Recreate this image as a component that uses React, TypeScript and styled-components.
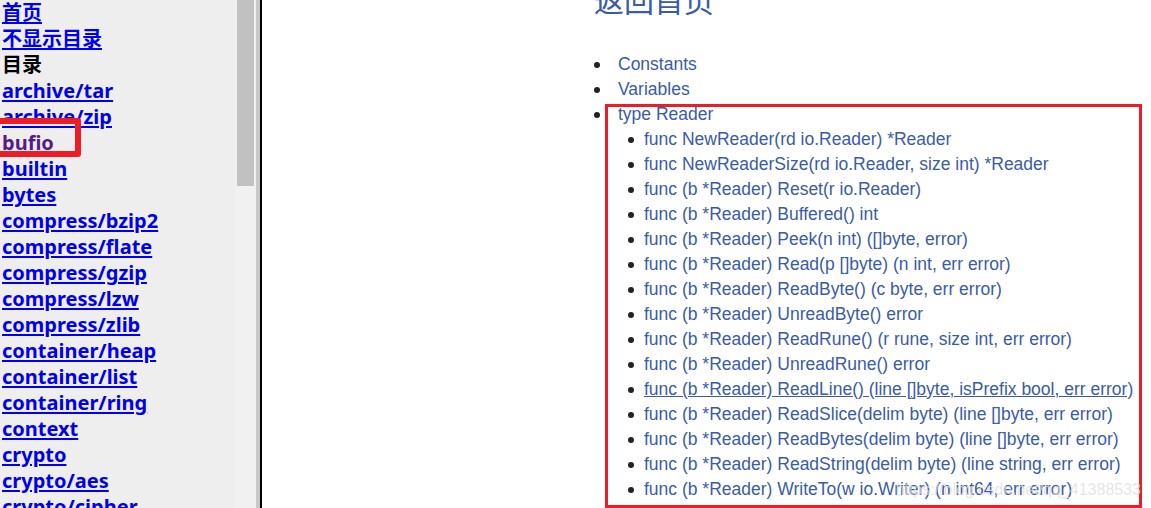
import React from "react";
import styled, { createGlobalStyle } from "styled-components";

const GlobalStyle = createGlobalStyle`
  html, body {
    margin: 0;
    padding: 0;
    height: 100%;
    overflow: hidden;
    background: #ffffff;
  }
  #root {
    height: 100%;
  }
`;

const Page = styled.div`
  display: flex;
  height: 508px;
  overflow: hidden;
`;

const Sidebar = styled.aside`
  display: flex;
  flex: 0 0 auto;
  height: 100%;
  background: #eeeeee;
`;

const Nav = styled.nav`
  width: 233px;
  padding-left: 2px;
  font-family: "Noto Sans", "Noto Sans CJK SC", sans-serif;
  font-size: 20px;
  font-weight: 700;
  line-height: 26px;
  white-space: nowrap;
`;

const NavLink = styled.a<{ $visited?: boolean }>`
  position: relative;
  display: block;
  width: fit-content;
  color: ${(p) => (p.$visited ? "#551a8b" : "#0000ee")};
  text-decoration: underline;
  text-underline-offset: 2px;
`;

const NavTitle = styled.div`
  color: #000000;
`;

const Mark = styled.span`
  position: absolute;
  top: -12px;
  left: -12px;
  width: 79px;
  height: 27px;
  border: 6px solid #ee1c25;
  border-radius: 3px;
`;

const Track = styled.div`
  width: 21px;
  height: 100%;
  background: #f1f1f1;
`;

const Thumb = styled.div`
  width: 17px;
  height: 186px;
  margin-left: 2px;
  background: #c1c1c1;
`;

const Divider = styled.div`
  width: 4px;
  height: 100%;
  background: #c8c8c8;
  border-right: 2px solid #000000;
`;

const Main = styled.main`
  position: relative;
  flex: 1;
  padding-left: 332px;
  font-family: "Liberation Sans", Arial, sans-serif;
  color: #3a5ba8;
`;

const Heading = styled.h1`
  margin: -19px 0 0;
  font-family: "Noto Sans CJK SC", sans-serif;
  font-size: 30px;
  font-weight: 400;
  line-height: 36px;
  color: #3a5ba8;
`;

const Index = styled.ul`
  margin: 34.5px 0 0;
  padding-left: 24px;
  font-size: 17.5px;
  line-height: 25px;
  list-style: none;
`;

const SubIndex = styled.ul`
  margin: 0;
  padding-left: 26px;
  list-style: none;
`;

const Item = styled.li<{ $sub?: boolean }>`
  position: relative;
  white-space: nowrap;

  &::before {
    content: "";
    position: absolute;
    top: 10px;
    left: ${(p) => (p.$sub ? "-16px" : "-24px")};
    width: 6px;
    height: 6px;
    border-radius: 50%;
    background: #222222;
  }
`;

const Link = styled.a<{ $hover?: boolean }>`
  color: #3a5ba8;
  text-decoration: ${(p) => (p.$hover ? "underline" : "none")};
`;

const Highlight = styled.span`
  position: absolute;
  top: 2.5px;
  left: -13px;
  width: 531px;
  height: 397.5px;
  border: 3px solid #ee1c25;
  pointer-events: none;
`;

const Watermark = styled.div`
  position: absolute;
  right: 10px;
  bottom: 9px;
  font-family: "Liberation Sans", Arial, sans-serif;
  font-size: 16px;
  color: rgba(222, 222, 222, 0.78);
  pointer-events: none;
`;

const packages = [
  "archive/tar",
  "archive/zip",
  "bufio",
  "builtin",
  "bytes",
  "compress/bzip2",
  "compress/flate",
  "compress/gzip",
  "compress/lzw",
  "compress/zlib",
  "container/heap",
  "container/list",
  "container/ring",
  "context",
  "crypto",
  "crypto/aes",
  "crypto/cipher",
];

const methods = [
  "func NewReader(rd io.Reader) *Reader",
  "func NewReaderSize(rd io.Reader, size int) *Reader",
  "func (b *Reader) Reset(r io.Reader)",
  "func (b *Reader) Buffered() int",
  "func (b *Reader) Peek(n int) ([]byte, error)",
  "func (b *Reader) Read(p []byte) (n int, err error)",
  "func (b *Reader) ReadByte() (c byte, err error)",
  "func (b *Reader) UnreadByte() error",
  "func (b *Reader) ReadRune() (r rune, size int, err error)",
  "func (b *Reader) UnreadRune() error",
  "func (b *Reader) ReadLine() (line []byte, isPrefix bool, err error)",
  "func (b *Reader) ReadSlice(delim byte) (line []byte, err error)",
  "func (b *Reader) ReadBytes(delim byte) (line []byte, err error)",
  "func (b *Reader) ReadString(delim byte) (line string, err error)",
  "func (b *Reader) WriteTo(w io.Writer) (n int64, err error)",
];

function App() {
  return (
    <Page>
      <GlobalStyle />
      <Sidebar>
        <Nav>
          <NavLink href="#">首页</NavLink>
          <NavLink href="#">不显示目录</NavLink>
          <NavTitle>目录</NavTitle>
          {packages.map((name) => (
            <NavLink key={name} href="#" $visited={name === "bufio"}>
              {name}
              {name === "bufio" && <Mark />}
            </NavLink>
          ))}
        </Nav>
        <Track>
          <Thumb />
        </Track>
        <Divider />
      </Sidebar>
      <Main>
        <Heading>返回首页</Heading>
        <Index>
          <Item>
            <Link href="#">Constants</Link>
          </Item>
          <Item>
            <Link href="#">Variables</Link>
          </Item>
          <Item>
            <Highlight />
            <Link href="#">type Reader</Link>
            <SubIndex>
              {methods.map((m) => (
                <Item key={m} $sub>
                  <Link href="#" $hover={m.includes("ReadLine")}>
                    {m}
                  </Link>
                </Item>
              ))}
            </SubIndex>
          </Item>
        </Index>
        <Watermark>https://blog.csdn.net/qq_41388533</Watermark>
      </Main>
    </Page>
  );
}

export default App;
